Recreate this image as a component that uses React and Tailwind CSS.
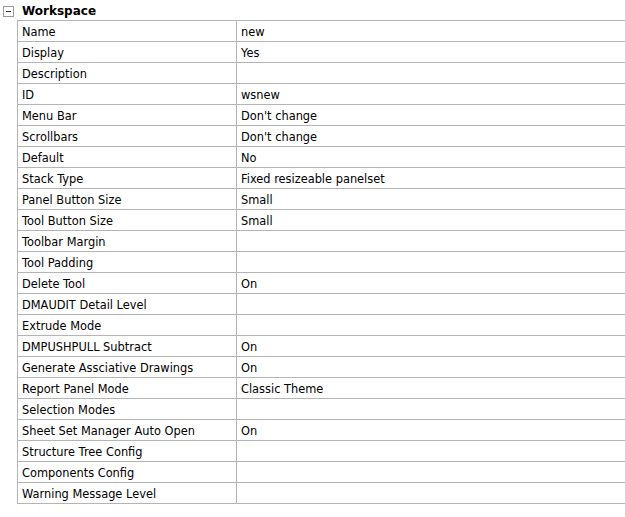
const rows = [
  ['Name', 'new'],
  ['Display', 'Yes'],
  ['Description', ''],
  ['ID', 'wsnew'],
  ['Menu Bar', "Don't change"],
  ['Scrollbars', "Don't change"],
  ['Default', 'No'],
  ['Stack Type', 'Fixed resizeable panelset'],
  ['Panel Button Size', 'Small'],
  ['Tool Button Size', 'Small'],
  ['Toolbar Margin', ''],
  ['Tool Padding', ''],
  ['Delete Tool', 'On'],
  ['DMAUDIT Detail Level', ''],
  ['Extrude Mode', ''],
  ['DMPUSHPULL Subtract', 'On'],
  ['Generate Assciative Drawings', 'On'],
  ['Report Panel Mode', 'Classic Theme'],
  ['Selection Modes', ''],
  ['Sheet Set Manager Auto Open', 'On'],
  ['Structure Tree Config', ''],
  ['Components Config', ''],
  ['Warning Message Level', ''],
]

export default function App() {
  return (
    <div className="w-[625px] h-[517px] bg-white text-black overflow-hidden font-['DejaVu_Sans',sans-serif] text-[11.4px]">
      <div className="h-[20px] flex items-center pt-[2px]">
        <span className="ml-[3px] w-[11px] h-[11px] border border-[#9a9a9a] bg-white flex items-center justify-center">
          <span className="w-[5px] h-px bg-[#333]"></span>
        </span>
        <span className="ml-[8px] font-bold text-[12px]">Workspace</span>
      </div>
      <div className="ml-[17px] border-l border-t border-[#b4b4b4]">
        {rows.map(([label, value]) => (
          <div key={label} className="flex h-[21px] border-b border-[#b4b4b4]">
            <div className="w-[219px] border-r border-[#b4b4b4] pl-[4px] pt-px leading-[20px] whitespace-nowrap">{label}</div>
            <div className="flex-1 pl-[4px] pt-px leading-[20px] whitespace-nowrap">{value}</div>
          </div>
        ))}
      </div>
    </div>
  )
}
